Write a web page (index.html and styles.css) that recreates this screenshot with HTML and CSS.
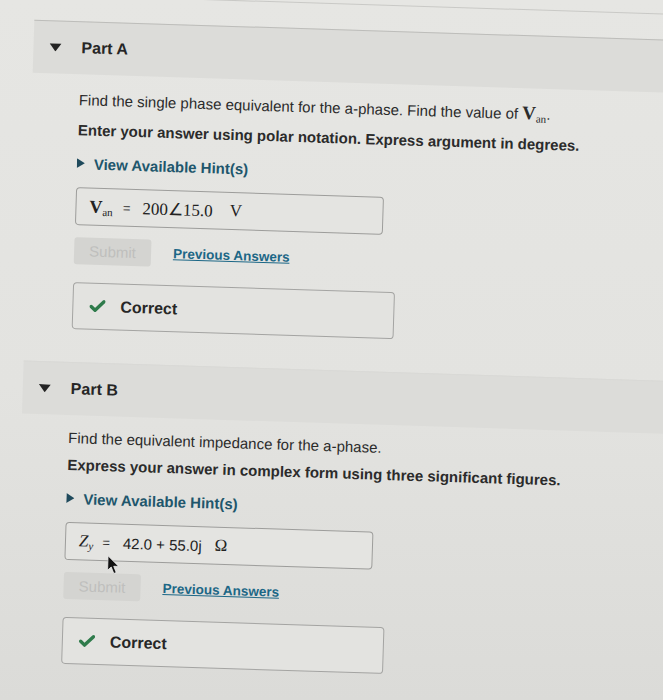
FILE: index.html
```html
<!DOCTYPE html>
<html lang="en">
<head>
<meta charset="utf-8">
<title>Parts A and B</title>
<link rel="stylesheet" href="styles.css">
</head>
<body>
<div class="screen">
  <div class="prev-section"></div>

  <section class="part">
    <div class="part-head">
      <svg class="caret" width="12" height="8" viewBox="0 0 12 8"><polygon points="0,0 12,0 6,8"/></svg>
      <h2 class="part-title">Part A</h2>
    </div>
    <div class="part-body">
      <p class="q q-math">Find the single phase equivalent for the a-phase. Find the value of <span class="mv">V<sub>an</sub></span>.</p>
      <p class="q strong">Enter your answer using polar notation. Express argument in degrees.</p>
      <a class="hint"><svg class="hint-arrow" width="8" height="10" viewBox="0 0 8 10"><polygon points="0,0 8,5 0,10"/></svg>View Available Hint(s)</a>
      <div class="answer">
        <span class="lhs lhs-v">V<sub>an</sub></span>
        <span class="eq">=</span>
        <span class="val val-polar">200∠15.0</span>
        <span class="unit unit-v">V</span>
      </div>
      <div class="actions">
        <button class="submit" type="button">Submit</button>
        <a class="prev-ans">Previous Answers</a>
      </div>
      <div class="feedback">
        <svg class="check" width="16" height="13" viewBox="0 0 16 13"><polyline points="1.8,6.8 5.8,10.5 14.5,1.8"/></svg>
        <span class="fb-text">Correct</span>
      </div>
    </div>
  </section>

  <section class="part">
    <div class="part-head">
      <svg class="caret" width="12" height="8" viewBox="0 0 12 8"><polygon points="0,0 12,0 6,8"/></svg>
      <h2 class="part-title">Part B</h2>
    </div>
    <div class="part-body">
      <p class="q">Find the equivalent impedance for the a-phase.</p>
      <p class="q strong">Express your answer in complex form using three significant figures.</p>
      <a class="hint"><svg class="hint-arrow" width="8" height="10" viewBox="0 0 8 10"><polygon points="0,0 8,5 0,10"/></svg>View Available Hint(s)</a>
      <div class="answer">
        <span class="lhs lhs-z">Z<sub>y</sub></span>
        <span class="eq eq-z">=</span>
        <span class="val val-complex">42.0 + 55.0j</span>
        <span class="unit unit-ohm">Ω</span>
        <svg class="pointer" width="13" height="19" viewBox="0 0 13 19"><path d="M0.5 0.5 L0.5 15 L4 11.6 L6.8 18 L9.2 17 L6.5 10.8 L11.5 10.8 Z"/></svg>
      </div>
      <div class="actions">
        <button class="submit" type="button">Submit</button>
        <a class="prev-ans">Previous Answers</a>
      </div>
      <div class="feedback">
        <svg class="check" width="16" height="13" viewBox="0 0 16 13"><polyline points="1.8,6.8 5.8,10.5 14.5,1.8"/></svg>
        <span class="fb-text">Correct</span>
      </div>
    </div>
  </section>
</div>
</body>
</html>
```
FILE: styles.css
```css
html, body {
  margin: 0;
  padding: 0;
  overflow: hidden;
  background: #e2e2df;
}

body {
  width: 663px;
  height: 700px;
  background: linear-gradient(180deg, #e6e6e3 0%, #e3e3e0 55%, #dbdbd8 100%);
  font-family: "Liberation Sans", Arial, sans-serif;
  color: #2b2b2b;
}

.screen {
  display: flow-root;
  width: 720px;
  transform: rotate(1.8deg);
  transform-origin: 70px 350px;
}

.prev-section {
  margin-top: -5px;
  border-top: 1px solid #c9c9c6;
}

.part {
  margin-top: 25px;
}

.part + .part {
  margin-top: 33px;
}

.part-head {
  margin-left: 24px;
  height: 53px;
  box-sizing: border-box;
  display: flex;
  align-items: center;
  gap: 20px;
  padding-left: 16px;
  background: #dcdcd9;
  border-top: 1px solid #bdbdba;
}

.part + .part .part-head {
  border-top-color: #d9d9d6;
}

.caret {
  display: block;
  fill: #242424;
}

.part-title {
  margin: 0;
  font-size: 16px;
  font-weight: bold;
  color: #262626;
}

.part-body {
  padding-left: 71px;
}

.q {
  margin: 13px 0 0;
  font-size: 15px;
  line-height: 20px;
  color: #2b2b2b;
}

.q-math {
  line-height: 26px;
}

.q + .q {
  margin-top: 7px;
}

.strong {
  font-weight: bold;
}

.mv {
  font-family: "Liberation Serif", "Times New Roman", serif;
  font-weight: bold;
  font-size: 19px;
  line-height: 1;
}

.mv sub {
  font-size: 11px;
  font-weight: normal;
  vertical-align: -3px;
  line-height: 1;
}

.hint {
  margin-top: 13px;
  display: flex;
  align-items: center;
  gap: 9px;
  height: 20px;
  font-size: 15px;
  font-weight: bold;
  color: #20566c;
  text-decoration: none;
}

.hint-arrow {
  display: block;
  fill: #1f4a5c;
}

.answer {
  position: relative;
  margin-top: 14px;
  width: 308px;
  height: 38px;
  box-sizing: border-box;
  display: flex;
  align-items: center;
  padding-left: 13px;
  border: 1px solid #9d9d9b;
  border-radius: 4px;
  background: #e4e4e1;
}

.lhs {
  font-family: "Liberation Serif", "Times New Roman", serif;
  font-size: 18px;
  color: #222;
}

.lhs sub {
  font-size: 11px;
  vertical-align: -3px;
}

.lhs-v {
  font-weight: bold;
}

.lhs-v sub {
  font-weight: normal;
}

.lhs-z {
  font-style: italic;
  font-size: 17px;
}

.eq {
  margin-left: 10px;
  font-size: 13px;
  color: #333;
}

.eq-z {
  margin-left: 9px;
}

.val-polar {
  margin-left: 12px;
  font-family: "Liberation Serif", "Times New Roman", serif;
  font-size: 17px;
  color: #222;
}

.val-complex {
  margin-left: 13px;
  font-size: 15px;
  color: #222;
}

.unit {
  font-family: "Liberation Serif", "Times New Roman", serif;
  font-size: 17px;
  color: #222;
}

.unit-v {
  margin-left: 17px;
}

.unit-ohm {
  margin-left: 13px;
}

.pointer {
  position: absolute;
  left: 42px;
  top: 31px;
  fill: #111;
  stroke: #f2f2f2;
  stroke-width: 0.8;
}

.actions {
  margin-top: 12px;
  display: flex;
  align-items: center;
  gap: 22px;
}

.submit {
  width: 77px;
  height: 27px;
  border: none;
  border-radius: 3px;
  background: #d4d4d1;
  color: #bfbfbd;
  font-family: "Liberation Sans", Arial, sans-serif;
  font-size: 15px;
  padding: 0;
}

.prev-ans {
  font-size: 13.5px;
  font-weight: bold;
  color: #1c6786;
  text-decoration: underline;
}

.feedback {
  margin-top: 18px;
  width: 322px;
  height: 47px;
  box-sizing: border-box;
  display: flex;
  align-items: center;
  gap: 15px;
  padding-left: 16px;
  border: 1px solid #a4a4a2;
  border-radius: 4px;
  background: #e3e3e0;
}

.check {
  display: block;
  fill: none;
  stroke: #2f7b4b;
  stroke-width: 3.4;
  stroke-linecap: round;
  stroke-linejoin: round;
}

.fb-text {
  font-size: 16px;
  font-weight: bold;
  color: #272727;
}
```
